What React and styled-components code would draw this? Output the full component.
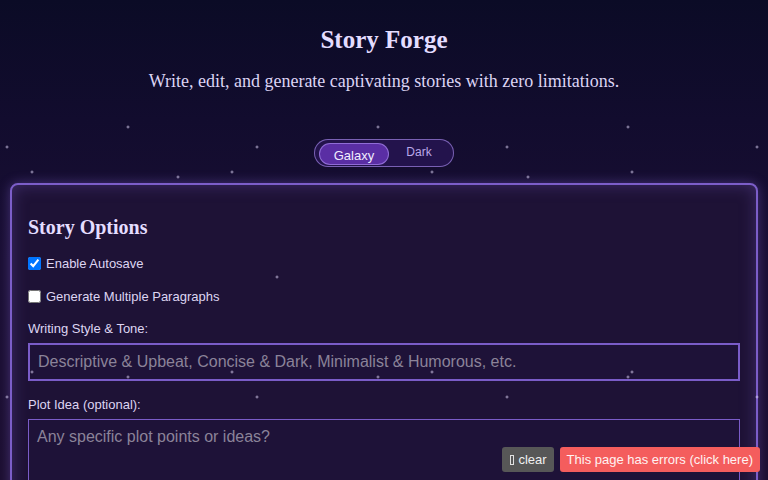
import React from "react"
import styled, { createGlobalStyle } from "styled-components"

const GlobalStyle = createGlobalStyle`
  html, body {
    margin: 0;
    min-height: 100%;
  }

  body {
    background: linear-gradient(180deg, #0b0b26 0%, #120c2e 120px, #1a0f34 260px, #1c0f30 480px);
    background-attachment: fixed;
    font-family: "Liberation Sans", Arial, sans-serif;
    color: #ddd5f2;
  }
`

const star = (x, y) =>
  `radial-gradient(circle at ${x}px ${y}px, rgba(230, 220, 255, 0.6) 0, rgba(230, 220, 255, 0.45) 1px, transparent 1.9px)`

const Stars = styled.div`
  position: fixed;
  inset: 0;
  pointer-events: none;
  z-index: 5;
  background-image: ${star(128, 127)}, ${star(7, 147)}, ${star(32, 172)},
    ${star(178, 177)}, ${star(277, 277)};
  background-size: 250px 250px, 250px 250px, 200px 200px, 350px 350px,
    500px 500px;
  background-repeat: repeat;
`

const Page = styled.main`
  display: flex;
  flex-direction: column;
  align-items: center;
`

const Header = styled.header`
  display: flex;
  flex-direction: column;
  align-items: center;
  padding-top: 25px;
`

const Title = styled.h1`
  margin: 0;
  font-family: "Liberation Serif", "Times New Roman", serif;
  font-size: 25px;
  line-height: 30px;
  font-weight: 700;
  color: #e4ddff;
`

const Subtitle = styled.p`
  margin: 15px 0 0;
  font-family: "Liberation Serif", "Times New Roman", serif;
  font-size: 18px;
  line-height: 22px;
  color: #dcd4f4;
`

const Toggle = styled.div`
  display: flex;
  align-items: center;
  margin-top: 47px;
  box-sizing: border-box;
  width: 140px;
  height: 28px;
  padding: 0 4px;
  border: 1px solid rgba(168, 138, 236, 0.65);
  border-radius: 999px;
  background: #23134c;
`

const ToggleButton = styled.button`
  box-sizing: border-box;
  height: 22px;
  border-radius: 999px;
  font-family: "Liberation Sans", Arial, sans-serif;
  cursor: pointer;
  padding: 0;
  ${({ $active }) =>
    $active
      ? `
    width: 70px;
    margin-top: 2px;
    padding-top: 2px;
    border: 1px solid rgba(190, 160, 255, 0.55);
    background: #5a2ea4;
    color: #f1ecff;
    font-size: 13px;
  `
      : `
    flex: 1;
    margin-top: -2px;
    border: none;
    background: transparent;
    color: #baa8e8;
    font-size: 12px;
  `}
`

const Panel = styled.section`
  align-self: stretch;
  margin: 16px 10px 0;
  padding: 30px 16px 40px;
  border: 2px solid #7c5ec9;
  border-radius: 8px;
  background: #1e1236;
  box-shadow: 0 0 12px rgba(124, 94, 201, 0.45),
    inset 0 0 16px rgba(124, 94, 201, 0.35);
`

const PanelTitle = styled.h2`
  margin: 0 0 14px;
  font-family: "Liberation Serif", "Times New Roman", serif;
  font-size: 20px;
  line-height: 24px;
  font-weight: 700;
  color: #e4ddff;
`

const CheckRow = styled.label`
  display: flex;
  align-items: center;
  height: 20px;
  margin-bottom: ${({ $last }) => ($last ? "15px" : "13px")};
  font-size: 13px;
  color: #ddd5f2;
`

const Check = styled.input`
  width: 13px;
  height: 13px;
  margin: 0 5px 0 0;
`

const FieldLabel = styled.label`
  display: block;
  font-size: 13px;
  line-height: 16px;
  color: #ddd5f2;
  margin-bottom: 6px;
`

const TextInput = styled.input`
  display: block;
  box-sizing: border-box;
  width: 100%;
  height: 38px;
  margin-bottom: 16px;
  padding: 0 8px;
  border: 2px solid #7a5cc8;
  background: #1e1238;
  color: #eee8ff;
  font-family: "Liberation Sans", Arial, sans-serif;
  font-size: 16px;
  outline: none;

  &::placeholder {
    color: #8b8399;
  }
`

const TextArea = styled.textarea`
  display: block;
  box-sizing: border-box;
  width: 100%;
  height: 110px;
  padding: 7px 8px;
  border: 1px solid #7a5cc8;
  background: #1e1238;
  color: #eee8ff;
  font-family: "Liberation Sans", Arial, sans-serif;
  font-size: 16px;
  line-height: 20px;
  resize: vertical;
  outline: none;

  &::placeholder {
    color: #8b8399;
  }
`

const ErrorBar = styled.div`
  position: fixed;
  right: 8px;
  bottom: 8px;
  z-index: 10;
  display: flex;
  gap: 6px;
`

const OverlayButton = styled.button`
  display: flex;
  align-items: center;
  gap: 4px;
  height: 25px;
  padding: ${({ $danger }) => ($danger ? "0 7px" : "0 7px 0 8px")};
  border: none;
  border-radius: 3px;
  background: ${({ $danger }) => ($danger ? "#f45d5d" : "#575757")};
  color: ${({ $danger }) => ($danger ? "#fff2f2" : "#f0f0f0")};
  font-family: "Liberation Sans", Arial, sans-serif;
  font-size: 13px;
  cursor: pointer;
`

const Tofu = styled.span`
  display: inline-block;
  box-sizing: border-box;
  width: 4px;
  height: 10px;
  border: 1px solid #e0e0e0;
`

const App = () => (
  <>
    <GlobalStyle />
    <Stars />
    <Page>
      <Header>
        <Title>Story Forge</Title>
        <Subtitle>
          Write, edit, and generate captivating stories with zero limitations.
        </Subtitle>
        <Toggle>
          <ToggleButton $active>Galaxy</ToggleButton>
          <ToggleButton>Dark</ToggleButton>
        </Toggle>
      </Header>

      <Panel>
        <PanelTitle>Story Options</PanelTitle>
        <CheckRow>
          <Check type="checkbox" defaultChecked />
          Enable Autosave
        </CheckRow>
        <CheckRow $last>
          <Check type="checkbox" />
          Generate Multiple Paragraphs
        </CheckRow>

        <FieldLabel htmlFor="tone">Writing Style &amp; Tone:</FieldLabel>
        <TextInput
          id="tone"
          placeholder="Descriptive & Upbeat, Concise & Dark, Minimalist & Humorous, etc."
        />

        <FieldLabel htmlFor="plot">Plot Idea (optional):</FieldLabel>
        <TextArea id="plot" placeholder="Any specific plot points or ideas?" />
      </Panel>
    </Page>

    <ErrorBar>
      <OverlayButton>
        <Tofu />
        clear
      </OverlayButton>
      <OverlayButton $danger>This page has errors (click here)</OverlayButton>
    </ErrorBar>
  </>
)

export default App
